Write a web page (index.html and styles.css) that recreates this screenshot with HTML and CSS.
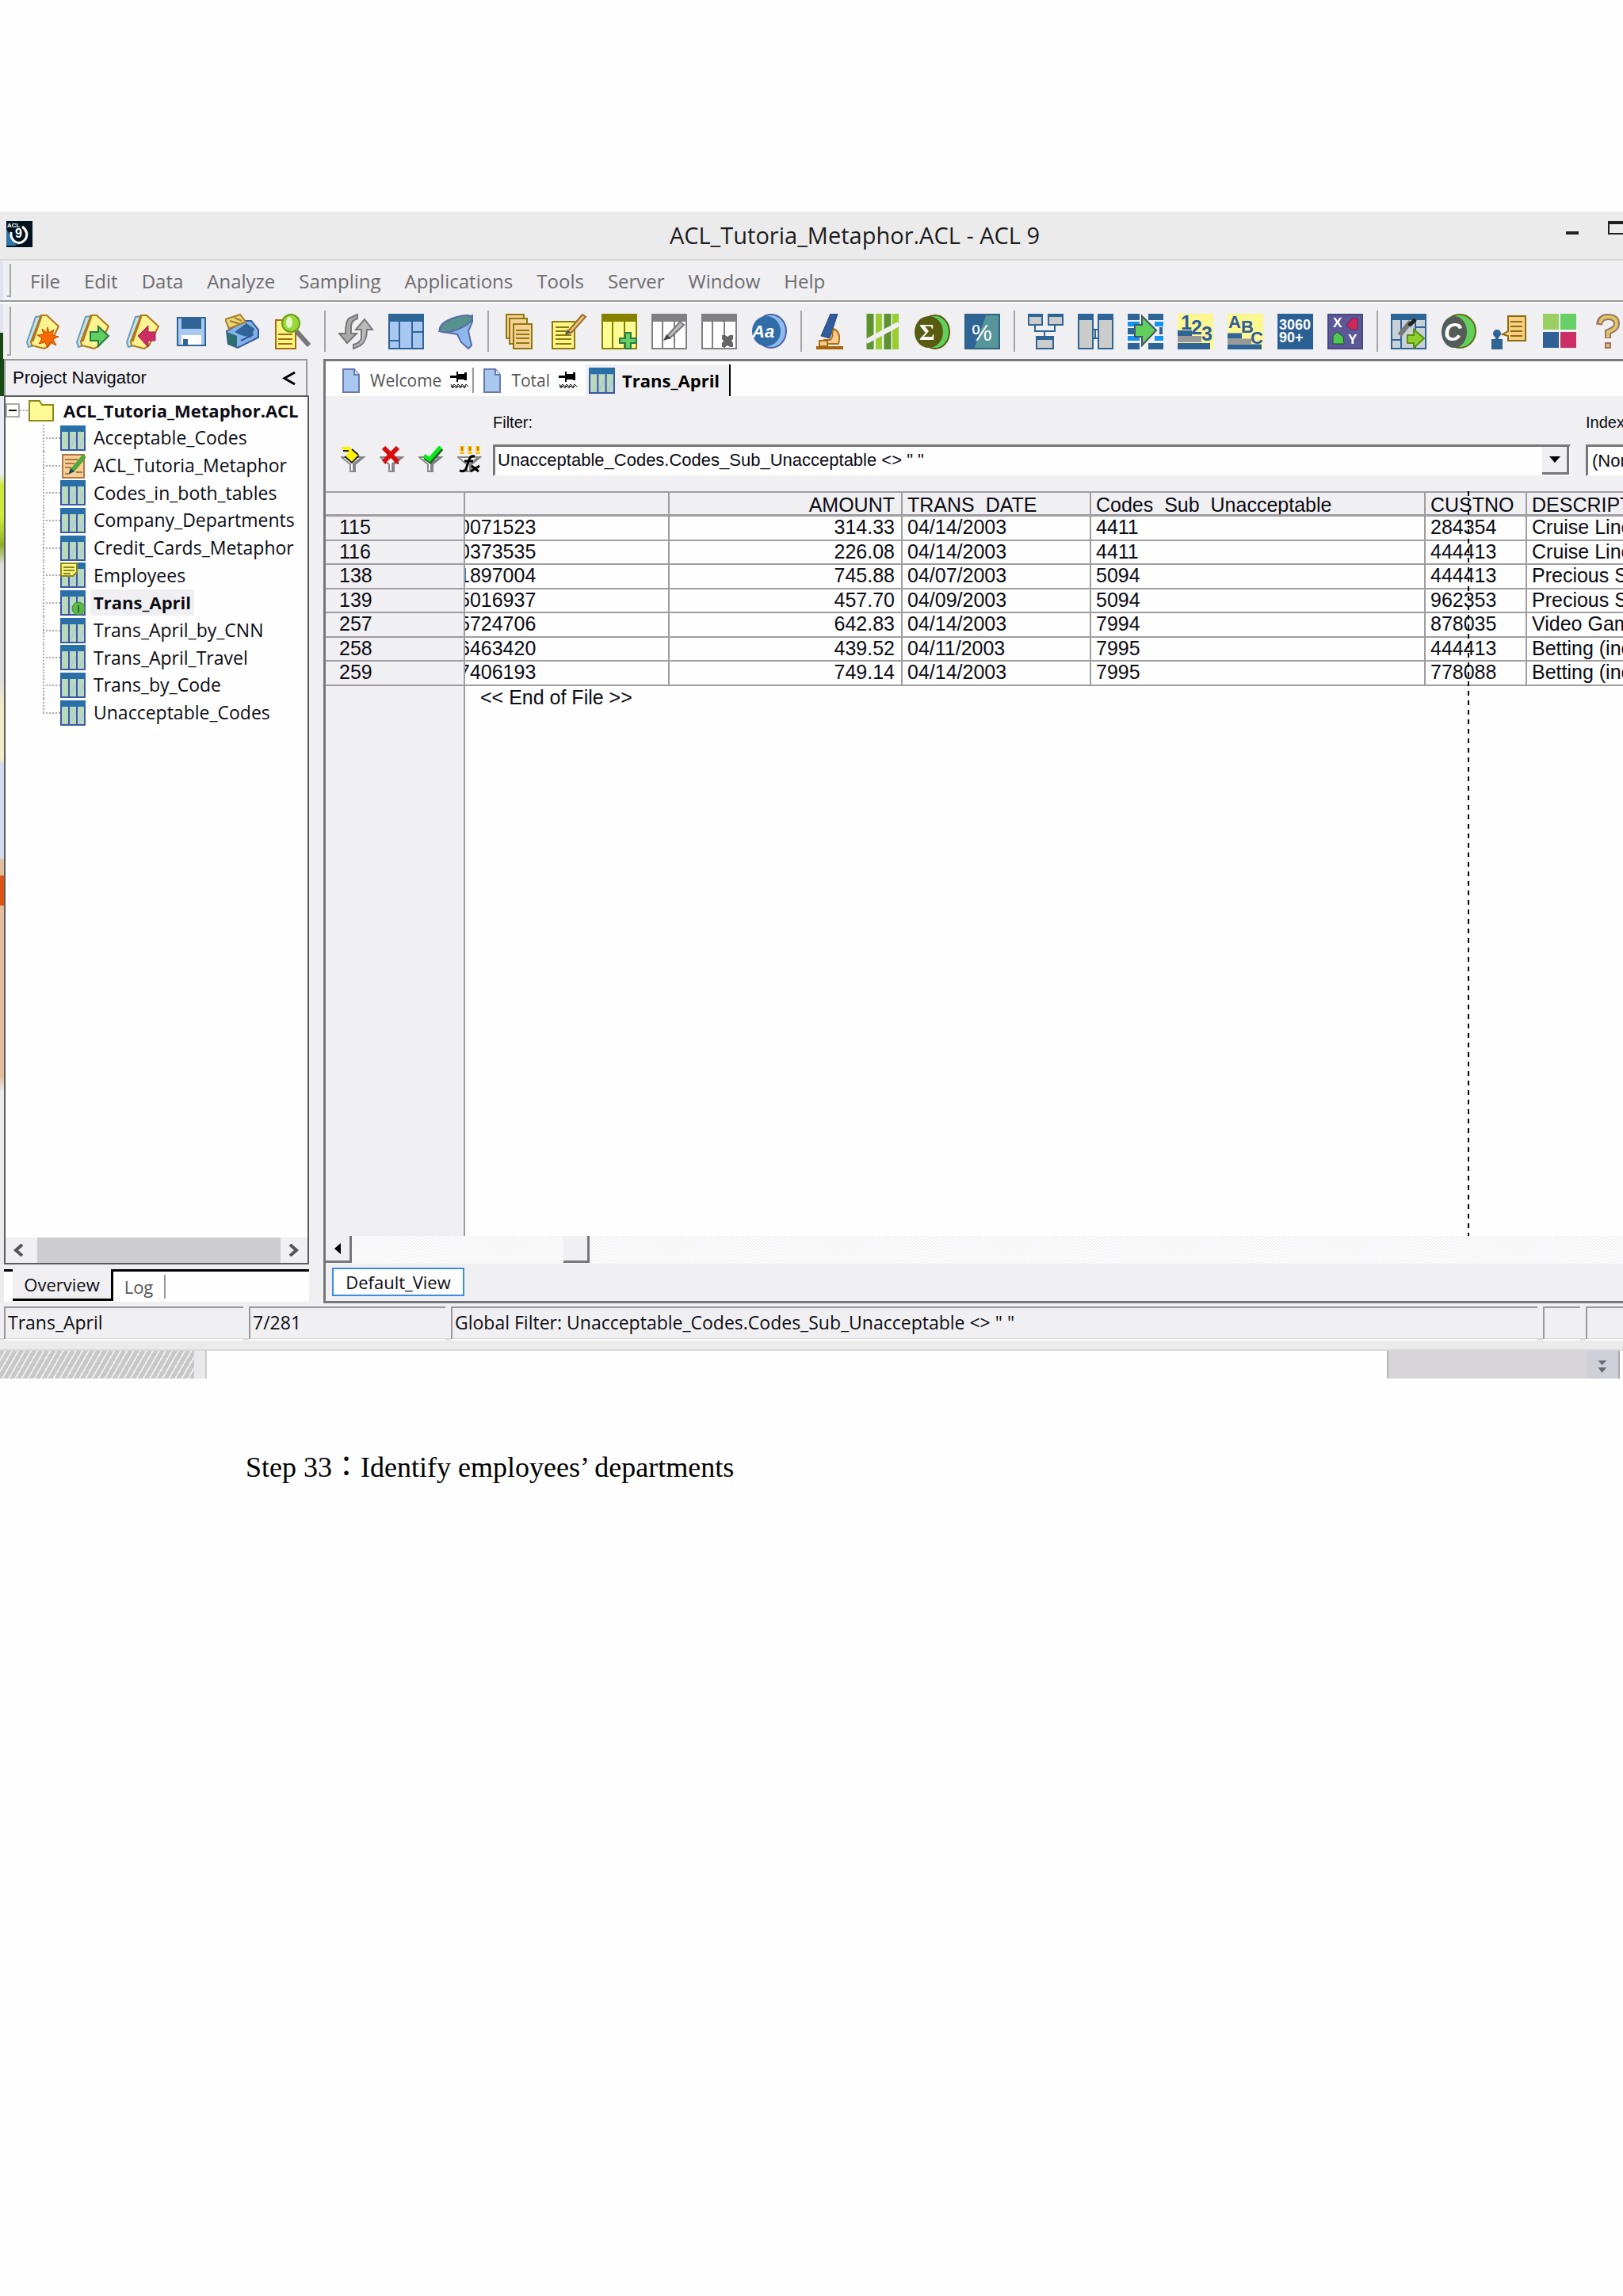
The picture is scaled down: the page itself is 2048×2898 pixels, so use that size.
FILE: index.html
```html
<!DOCTYPE html>
<html lang="en">
<head>
<meta charset="utf-8">
<title>ACL_Tutoria_Metaphor.ACL - ACL 9</title>
<link rel="stylesheet" href="styles.css">
</head>
<body>
<svg class="defs" aria-hidden="true">
  <defs>
    <symbol id="table" viewBox="0 0 32 32">
      <rect x="1" y="1" width="30" height="30" fill="#b9d9bd" stroke="#3c57a4" stroke-width="2"/>
      <rect x="0" y="0" width="32" height="8" fill="#2a70a8"/>
      <path d="M11 8V31M21 8V31" stroke="#3c57a4" stroke-width="2"/>
      <path d="M14 27L19 14M25 27L29 16" stroke="#a9c9e8" stroke-width="2"/>
    </symbol>
    <symbol id="doc" viewBox="0 0 22 31">
      <path d="M1 1H15L21 8V30H1Z" fill="#a8c8f0" stroke="#6a78b0" stroke-width="2"/>
      <path d="M15 1V8H21" fill="#d8e8fa" stroke="#6a78b0" stroke-width="2"/>
    </symbol>
    <symbol id="pin" viewBox="0 0 24 22">
      <path d="M0 5H9V8H0ZM8 0H10V13H8ZM10 3H18V10H10ZM18 1H21V11H18Z" fill="#000"/>
      <path d="M1 16L3 19L5 16L8 19L10 16L13 19L15 16L18 19L20 16L23 19" fill="none" stroke="#000" stroke-width="1"/>
      <path d="M1 18L3 21L5 18L8 21L10 18L13 21L15 18L18 21L20 18" fill="none" stroke="#000" stroke-width="1"/>
    </symbol>
    <symbol id="funnel" viewBox="0 0 32 34">
      <path d="M1 14H29L18 23V32H12V23Z" fill="#fff" stroke="#8a8a8c" stroke-width="2"/>
      <path d="M19 23L30 14H25L15 22V33H19Z" fill="#858588"/>
    </symbol>
    <symbol id="book" viewBox="0 0 45 45">
      <path d="M13 4L19 3L11 40L4 42L2 36Z" fill="#c3e3f2" stroke="#6c9db5" stroke-width="2"/>
      <path d="M20 2H27L42 16L30 40L24 44L8 40L7 35Z" fill="#fdf391" stroke="#b07818" stroke-width="2"/>
      <path d="M20 3L9 35" stroke="#b07818" stroke-width="3"/>
    </symbol>
  </defs>
</svg>

<div class="page">
  <div class="window">
    <header class="titlebar">
      <svg class="app-icon" viewBox="0 0 33 33"><rect width="33" height="33" fill="#04141f"/><path d="M0 10L12 31H0Z" fill="#2b78a8"/><path d="M2 16Q4 30 20 30H2Z" fill="#2b78a8"/><path d="M6 14Q5 22 11 26Q18 30 24 23Q29 14 20 7" fill="none" stroke="#fff" stroke-width="3"/><text x="11" y="21" class="glyph" font-size="16" fill="#fff">9</text><text x="1" y="8" class="glyph" font-size="8" fill="#fff">ACL</text></svg>
      <h1 class="title">ACL_Tutoria_Metaphor.ACL - ACL 9</h1>
      <div class="controls">
        <button type="button" class="minimize" aria-label="Minimize"></button>
        <button type="button" class="maximize" aria-label="Maximize"></button>
      </div>
    </header>

    <nav class="menubar">
      <span class="grip"></span>
      <button type="button">File</button><button type="button">Edit</button><button type="button">Data</button><button type="button">Analyze</button><button type="button">Sampling</button><button type="button">Applications</button><button type="button">Tools</button><button type="button">Server</button><button type="button">Window</button><button type="button">Help</button>
    </nav>

    <div class="toolbar">
      <span class="grip"></span>
      <div class="tools">
        <button type="button" aria-label="New project"><svg viewBox="0 0 45 45"><use href="#book"/><path d="M28 17L30 24L36 20L34 27L42 29L35 32L39 40L31 36L28 43L25 36L17 38L21 31L15 27L23 26L21 19L27 24Z" fill="#ff6a00" stroke="#c04a00"/></svg></button>
        <button type="button" aria-label="Open project"><svg viewBox="0 0 45 45"><use href="#book"/><path d="M19 23H29V16L42 28L29 41V34H19Z" fill="#5fcf5f" stroke="#2a7a4a" stroke-width="2"/></svg></button>
        <button type="button" aria-label="Close project"><svg viewBox="0 0 45 45"><use href="#book"/><path d="M38 23H29V15L16 28L29 42V34H38Z" fill="#cc2f66" stroke="#a02050"/></svg></button>
        <button type="button" aria-label="Save"><svg viewBox="0 0 45 45"><rect x="3" y="5" width="35" height="35" fill="#a8c8f2" stroke="#2f6496" stroke-width="2"/><rect x="8" y="5" width="25" height="14" fill="#2f6496"/><rect x="8" y="27" width="25" height="12" fill="#fff"/><rect x="10" y="32" width="6" height="7" fill="#2f6496"/></svg></button>
        <button type="button" aria-label="Print"><svg viewBox="0 0 45 45"><path d="M2 22L24 9H33L42 20V30L16 43L4 38Z" fill="#82b2ea" stroke="#39569a" stroke-width="2"/><path d="M12 23L27 12L37 19L33 30L20 27Z" fill="#2f6496"/><path d="M2 23L15 28V43L4 38Z" fill="#2d6f70"/><path d="M20 34L36 26" stroke="#39569a" stroke-width="2"/><path d="M0 7L19 1L26 10L5 19Z" fill="#e8d67c" stroke="#a87c28" stroke-width="2"/><path d="M6 9L19 13M12 5L21 9" stroke="#a87c28" stroke-width="2"/></svg></button>
        <button type="button" aria-label="Search log"><svg viewBox="0 0 45 45"><rect x="1" y="8" width="25" height="36" fill="#fdf584" stroke="#a86c10" stroke-width="2"/><path d="M4 26H22M4 32H22M4 38H22" stroke="#a86c10" stroke-width="2"/><path d="M27 22L43 40" stroke="#777" stroke-width="6"/><circle cx="20" cy="12" r="11" fill="#9bd83a" stroke="#6a9c1a" stroke-width="2"/><ellipse cx="18" cy="11" rx="4" ry="7" fill="#e6f8c8"/></svg></button>
      </div>
      <div class="tools">
        <button type="button" aria-label="Refresh"><svg viewBox="0 0 45 45"><path d="M24 1L13 6Q9 10 9 25H1L11 37L23 25H16V15Q17 8 24 6Z" fill="#aaa" stroke="#777" stroke-width="2"/><path d="M19 44L28 40Q36 34 36 20H43L33 7L22 20H29V30Q28 37 19 39Z" fill="#bbb" stroke="#777" stroke-width="2"/></svg></button>
        <button type="button" aria-label="View layout"><svg viewBox="0 0 45 45"><rect x="1" y="1" width="43" height="43" fill="#a8c8f2" stroke="#2f6496" stroke-width="2"/><rect width="45" height="10" fill="#2f6496"/><path d="M14 9V44M30 9V44M1 34H14M30 23H44" stroke="#2f6496" stroke-width="2"/></svg></button>
        <button type="button" aria-label="Filter"><svg viewBox="0 0 45 45"><path d="M2 22L24 26L29 36L38 44L42 40L38 22L43 10V2Z" fill="#8cb8ee" stroke="#5a6ca8" stroke-width="2"/><path d="M2 22Q0 12 20 5Q40 -1 43 5Q42 13 24 20Q8 26 2 22Z" fill="#56918e" stroke="#5a6ca8" stroke-width="2"/></svg></button>
      </div>
      <div class="tools">
        <button type="button" aria-label="Copy"><svg viewBox="0 0 45 45"><g fill="#f8cf94" stroke="#8c7a10" stroke-width="2"><rect x="6" y="1" width="22" height="30"/><rect x="10" y="6" width="22" height="32"/><rect x="15" y="13" width="23" height="31"/></g><path d="M18 21H35M18 26H35M18 31H35M18 37H35" stroke="#8c7a10" stroke-width="2"/></svg></button>
        <button type="button" aria-label="Edit script"><svg viewBox="0 0 45 45"><rect x="1" y="10" width="28" height="34" fill="#fdf584" stroke="#8c7a10" stroke-width="2"/><path d="M5 17H22M5 22H18M5 27H25M5 32H25M5 38H25" stroke="#8c7a10" stroke-width="2"/><path d="M20 23L39 1L43 4L25 24Z" fill="#f0c080" stroke="#99702a" stroke-width="2"/><path d="M17 27L19 20L25 24Z" fill="#555"/></svg></button>
        <button type="button" aria-label="Add table"><svg viewBox="0 0 45 45"><rect x="1" y="1" width="43" height="43" fill="#fdfd94" stroke="#868200" stroke-width="2"/><rect width="45" height="10" fill="#868200"/><path d="M14 9V44M29 9V44" stroke="#868200" stroke-width="2"/><path d="M30 24H37V31H44V37H37V44H30V37H23V31H30Z" fill="#66cf66" stroke="#2c7a44" stroke-width="2"/></svg></button>
        <button type="button" aria-label="Edit table"><svg viewBox="0 0 45 45"><rect x="1" y="1" width="43" height="43" fill="#fff" stroke="#808083" stroke-width="2"/><rect width="45" height="10" fill="#808083"/><path d="M14 9V44M29 9V44" stroke="#808083" stroke-width="2"/><path d="M20 28L36 10L41 14L23 31Z" fill="#bbb" stroke="#777" stroke-width="2"/><path d="M15 34L19 26L24 31Z" fill="#444"/></svg></button>
        <button type="button" aria-label="Delete table"><svg viewBox="0 0 45 45"><rect x="1" y="1" width="43" height="43" fill="#fff" stroke="#808083" stroke-width="2"/><rect width="45" height="10" fill="#808083"/><path d="M14 9V44M29 9V44" stroke="#808083" stroke-width="2"/><path d="M26 27H30L33 29L36 27H40V32L38 34L40 37V42H36L33 40L30 42H26V37L28 34L26 32Z" fill="#666"/></svg></button>
        <button type="button" aria-label="Format"><svg viewBox="0 0 45 45"><ellipse cx="25" cy="22" rx="19" ry="21" fill="#8fbbee" stroke="#4a62a8" stroke-width="2"/><ellipse cx="19" cy="22" rx="18" ry="19" fill="#2f6ca8"/><text x="1" y="30" class="glyph italic" font-size="22" fill="#fff">Aa</text></svg></button>
      </div>
      <div class="tools">
        <button type="button" aria-label="Examine"><svg viewBox="0 0 45 45"><path d="M20 0H29L19 31L8 28Z" fill="#2f5c9c" stroke="#24487c"/><path d="M24 19Q34 24 30 38H12V33H20Q24 27 22 25Z" fill="#f8cc94" stroke="#b06c10" stroke-width="2"/><rect x="6" y="34" width="10" height="7" fill="#f8cc94" stroke="#b06c10" stroke-width="2"/><path d="M2 43H36" stroke="#a86408" stroke-width="4"/></svg></button>
        <button type="button" aria-label="Count"><svg viewBox="0 0 45 45"><path d="M7 0V45M29 0V45" stroke="#5c9330" stroke-width="9"/><path d="M18 0V45M39 0V45" stroke="#9acd32" stroke-width="8"/><path d="M2 35L43 13" stroke="#f0eff1" stroke-width="6"/></svg></button>
        <button type="button" aria-label="Total"><svg viewBox="0 0 45 45"><ellipse cx="26" cy="23" rx="18" ry="21" fill="#62cf5c" stroke="#585c10" stroke-width="2"/><ellipse cx="18" cy="23" rx="18" ry="20" fill="#585c10"/><text x="6" y="33" class="glyph serif" font-size="30" fill="#fff">Σ</text></svg></button>
        <button type="button" aria-label="Statistics"><svg viewBox="0 0 45 45"><rect width="45" height="45" fill="#2f6496"/><path d="M28 0H45V45H12Z" fill="#56969a"/><rect x="1" y="1" width="43" height="43" fill="none" stroke="#2f6080" stroke-width="2"/><text x="9" y="34" class="glyph regular" font-size="29" fill="#fff">%</text></svg></button>
      </div>
      <div class="tools">
        <button type="button" aria-label="Relations"><svg viewBox="0 0 45 45"><g fill="#ccc" stroke="#2f6496" stroke-width="2"><rect x="1" y="1" width="17" height="13"/><rect x="26" y="1" width="18" height="13"/><rect x="11" y="29" width="21" height="15"/></g><path d="M0 2H19M25 2H45M10 31H33" stroke="#2f6496" stroke-width="4"/><path d="M9 14V22H34V14M21 22V29" fill="none" stroke="#2f6496" stroke-width="2"/></svg></button>
        <button type="button" aria-label="Join"><svg viewBox="0 0 45 45"><g fill="#ccc" stroke="#2f6496" stroke-width="2"><rect x="1" y="1" width="18" height="43"/><rect x="26" y="1" width="18" height="43"/></g><path d="M0 4H20M25 4H45" stroke="#2f6496" stroke-width="8"/><path d="M19 20H26M19 31H26M22 20V31" stroke="#2f6496" stroke-width="2"/></svg></button>
        <button type="button" aria-label="Extract"><svg viewBox="0 0 45 45"><path d="M0 4H15M26 4H45M0 22H15M0 41H15M26 41H45" stroke="#2f6496" stroke-width="8"/><path d="M0 13H15M34 13H45M0 31H15M34 31H45" stroke="#1495f5" stroke-width="6"/><path d="M42 17V26" stroke="#2f6496" stroke-width="4"/><path d="M9 14H18V3L36 21L18 40V29H9Z" fill="#62cf5c" stroke="#456" stroke-width="2"/></svg></button>
        <button type="button" aria-label="Sort"><svg viewBox="0 0 45 45"><rect width="45" height="45" fill="#fdf791"/><path d="M0 25H18M0 41H41" stroke="#2f6496" stroke-width="8"/><path d="M0 32H30" stroke="#999" stroke-width="8"/><g class="glyph" font-size="25" fill="#2f5c9c"><text x="4" y="20">1</text><text x="17" y="26">2</text><text x="30" y="34">3</text></g></svg></button>
        <button type="button" aria-label="Index"><svg viewBox="0 0 45 45"><rect width="45" height="45" fill="#fdf791"/><path d="M0 28H18M0 42H43" stroke="#2f6496" stroke-width="7"/><path d="M0 35H30" stroke="#999" stroke-width="7"/><g class="glyph" font-size="22" fill="#2f5c9c"><text x="1" y="18">A</text><text x="17" y="24">B</text><text x="29" y="38">C</text></g></svg></button>
        <button type="button" aria-label="Age"><svg viewBox="0 0 45 45"><rect width="45" height="45" fill="#2b6094"/><g class="glyph" font-size="18" fill="#fff"><text x="2" y="20">3060</text><text x="2" y="36">90+</text></g></svg></button>
        <button type="button" aria-label="Cross-tabulate"><svg viewBox="0 0 45 45"><rect x="1" y="1" width="43" height="43" fill="#5a5896" stroke="#4a4884" stroke-width="2"/><path d="M24 14L31 6H38V20H30Z" fill="#d0285c" stroke="#702050"/><path d="M7 38V28L12 23L20 29L21 38Z" fill="#4ec850" stroke="#205030"/><g class="glyph" font-size="17" fill="#fff"><text x="7" y="17">X</text><text x="26" y="38">Y</text></g></svg></button>
      </div>
      <div class="tools">
        <button type="button" aria-label="Export view"><svg viewBox="0 0 45 45"><rect x="1" y="1" width="43" height="43" fill="#c8d0d8" stroke="#2f6496" stroke-width="2"/><rect width="45" height="8" fill="#2f6496"/><path d="M13 8V44M31 8V44M1 33H13M31 17H44" stroke="#2f6496" stroke-width="2"/><path d="M11 27L25 10" stroke="#777" stroke-width="6"/><path d="M23 15L31 7" stroke="#222" stroke-width="5"/><path d="M21 27H29V20L42 31L29 43V37H21Z" fill="#8ed02c" stroke="#5a9010" stroke-width="2"/></svg></button>
        <button type="button" aria-label="Command"><svg viewBox="0 0 45 45"><ellipse cx="24" cy="22" rx="20" ry="21" fill="#62cf5c" stroke="#5c6c10" stroke-width="2"/><ellipse cx="17" cy="23" rx="16" ry="20" fill="#555b58"/><text x="4" y="34" class="glyph italic" font-size="31" fill="#fff">C</text></svg></button>
        <button type="button" aria-label="Notes"><svg viewBox="0 0 45 45"><circle cx="8" cy="25" r="5" fill="#2f6496"/><path d="M1 45V32H6V28H10V32H15V45Z" fill="#2f6496"/><path d="M22 3H44V34H22V28L15 26L22 22Z" fill="#f8cf84" stroke="#8c6c10" stroke-width="2"/><path d="M25 10H40M25 16H40M25 22H40M25 28H40" stroke="#8c6c10" stroke-width="2"/></svg></button>
        <button type="button" aria-label="Windows"><svg viewBox="0 0 45 45"><path d="M3 0H23V20H3Z" fill="#9acf62"/><path d="M25 0H45V20H25Z" fill="#66cf66"/><path d="M3 23H23V43H3Z" fill="#2f6096"/><path d="M25 23H45V43H25Z" fill="#cc2f66"/></svg></button>
        <button type="button" aria-label="Help"><svg viewBox="0 0 45 45"><path d="M11 14Q12 4 22 4Q33 4 33 13Q33 19 22 23V31M22 36V44" fill="none" stroke="#a0706a" stroke-width="8"/><path d="M12 12Q13 4 22 4Q33 4 33 13Q33 19 22 23V30M22 38V42" fill="none" stroke="#dcc860" stroke-width="4"/></svg></button>
      </div>
    </div>

    <div class="workspace">
      <aside class="navigator">
        <div class="nav-head"><h2>Project Navigator</h2><button type="button" aria-label="Collapse"><svg viewBox="0 0 18 18"><path d="M17 1L3 9L17 17" fill="none" stroke="#000" stroke-width="3"/></svg></button></div>
        <div class="nav-body">
          <ul class="tree">
            <li class="root"><span class="expander"></span><span class="stub"></span><svg class="folder" viewBox="0 0 32 27"><path d="M1 1H14L17 6H31V26H1Z" fill="#fdf996" stroke="#8c8a14" stroke-width="2"/></svg><b>ACL_Tutoria_Metaphor.ACL</b></li>
            <li><span class="branch"></span><svg><use href="#table"/></svg><span>Acceptable_Codes</span></li>
            <li><span class="branch"></span><svg viewBox="0 0 32 32"><rect x="3" y="2" width="27" height="29" fill="#f8cf98" stroke="#b07840" stroke-width="2"/><path d="M6 8H22M6 13H18M6 18H14M20 24H28M6 26H10" stroke="#b07840" stroke-width="2"/><path d="M15 22L31 3" stroke="#55a83c" stroke-width="6"/><path d="M10 27L13 19L18 23Z" fill="#245"/></svg><span>ACL_Tutoria_Metaphor</span></li>
            <li><span class="branch"></span><svg><use href="#table"/></svg><span>Codes_in_both_tables</span></li>
            <li><span class="branch"></span><svg><use href="#table"/></svg><span>Company_Departments</span></li>
            <li><span class="branch"></span><svg><use href="#table"/></svg><span>Credit_Cards_Metaphor</span></li>
            <li><span class="branch"></span><svg viewBox="0 0 32 32"><use href="#table"/><path d="M1 1H21V12L16 17H1Z" fill="#fdf58a" stroke="#8c8a14" stroke-width="2"/><path d="M4 6H18M4 10H18M4 14H13" stroke="#8c8a14" stroke-width="2"/></svg><span>Employees</span></li>
            <li class="current"><span class="branch"></span><svg viewBox="0 0 32 32"><use href="#table"/><circle cx="23" cy="23" r="8" fill="#5cb848" stroke="#3c8c3c"/><path d="M23 19V28" stroke="#2a6a3a" stroke-width="2"/></svg><b>Trans_April</b></li>
            <li><span class="branch"></span><svg><use href="#table"/></svg><span>Trans_April_by_CNN</span></li>
            <li><span class="branch"></span><svg><use href="#table"/></svg><span>Trans_April_Travel</span></li>
            <li><span class="branch"></span><svg><use href="#table"/></svg><span>Trans_by_Code</span></li>
            <li><span class="branch"></span><svg><use href="#table"/></svg><span>Unacceptable_Codes</span></li>
          </ul>
          <div class="nav-scroll">
            <button type="button" aria-label="Scroll left"><svg viewBox="0 0 14 16"><path d="M12 1L4 8L12 15" fill="none" stroke="#555" stroke-width="4"/></svg></button>
            <span class="nav-thumb"></span>
            <button type="button" aria-label="Scroll right"><svg viewBox="0 0 14 16"><path d="M2 1L10 8L2 15" fill="none" stroke="#555" stroke-width="4"/></svg></button>
          </div>
        </div>
        <div class="nav-tabs"><button type="button" class="on">Overview</button><button type="button" class="off">Log</button></div>
      </aside>

      <main class="document">
        <div class="doc-tabs">
          <button type="button" class="doc-tab"><svg class="doc-icon"><use href="#doc"/></svg>Welcome<svg class="pin"><use href="#pin"/></svg></button>
          <button type="button" class="doc-tab"><svg class="doc-icon"><use href="#doc"/></svg>Total<svg class="pin"><use href="#pin"/></svg></button>
          <button type="button" class="doc-tab active"><svg class="table-icon"><use href="#table"/></svg>Trans_April</button>
        </div>

        <div class="filter-bar">
          <div class="filter-tools">
            <button type="button" aria-label="Edit filter"><svg viewBox="0 0 32 34"><use href="#funnel"/><path d="M1 1H13V5H17L22 11L14 20L6 13L10 8H4Z" fill="#fff200"/><path d="M3 6H10M14 4L22 11M5 13L14 21L23 12" fill="none" stroke="#222" stroke-width="2"/></svg></button>
            <button type="button" aria-label="Remove filter"><svg viewBox="0 0 32 34"><use href="#funnel"/><path d="M6 20L8 22M20 20L24 22" stroke="#600" stroke-width="2"/><path d="M5 2L23 20M23 2L5 20" stroke="#d80c0c" stroke-width="6"/></svg></button>
            <button type="button" aria-label="Set filter"><svg viewBox="0 0 32 34"><use href="#funnel"/><path d="M8 14L15 19L29 3" fill="none" stroke="#2a5a2a" stroke-width="6"/><path d="M7 12L14 17L28 1" fill="none" stroke="#08e818" stroke-width="5"/></svg></button>
            <button type="button" aria-label="Filter expression"><svg viewBox="0 0 32 34"><use href="#funnel"/><path d="M6 0V10M16 0V10M26 0V10" stroke="#f8c000" stroke-width="5" stroke-dasharray="6 1 3"/><path d="M6 1V6M16 1V6M26 1V6" stroke="#a03000" stroke-width="1"/><path d="M22 13Q16 11 14 20L11 29Q9 33 3 31M9 19H20M18 25L27 32M28 25L17 32" fill="none" stroke="#000" stroke-width="3"/></svg></button>
          </div>
          <div class="field field-filter">
            <label for="filter">Filter:</label>
            <div class="combo"><input id="filter" type="text" value='Unacceptable_Codes.Codes_Sub_Unacceptable &lt;&gt; " "'><button type="button" aria-label="Filter history"><svg viewBox="0 0 14 8"><path d="M0 0H14L7 8Z"/></svg></button></div>
          </div>
          <div class="field field-index">
            <label for="index">Index:</label>
            <select id="index"><option>(None)</option></select>
          </div>
        </div>

        <div class="grid">
          <table>
            <colgroup><col class="c-row"><col class="c-card"><col class="c-amount"><col class="c-date"><col class="c-code"><col class="c-cust"><col></colgroup>
            <thead>
              <tr><th></th><th></th><th class="num"><span>AMOUNT</span></th><th><span>TRANS_DATE</span></th><th><span>Codes_Sub_Unacceptable</span></th><th><span>CUSTNO</span></th><th><span>DESCRIPTION</span></th></tr>
            </thead>
            <tbody>
              <tr><th>115</th><td class="card">0071523</td><td class="num">314.33</td><td>04/14/2003</td><td>4411</td><td>284354</td><td>Cruise Lines</td></tr>
              <tr><th>116</th><td class="card">0373535</td><td class="num">226.08</td><td>04/14/2003</td><td>4411</td><td>444413</td><td>Cruise Lines</td></tr>
              <tr><th>138</th><td class="card">1897004</td><td class="num">745.88</td><td>04/07/2003</td><td>5094</td><td>444413</td><td>Precious Stones</td></tr>
              <tr><th>139</th><td class="card">5016937</td><td class="num">457.70</td><td>04/09/2003</td><td>5094</td><td>962353</td><td>Precious Stones</td></tr>
              <tr><th>257</th><td class="card">5724706</td><td class="num">642.83</td><td>04/14/2003</td><td>7994</td><td>878035</td><td>Video Games</td></tr>
              <tr><th>258</th><td class="card">6463420</td><td class="num">439.52</td><td>04/11/2003</td><td>7995</td><td>444413</td><td>Betting (including</td></tr>
              <tr><th>259</th><td class="card">7406193</td><td class="num">749.14</td><td>04/14/2003</td><td>7995</td><td>778088</td><td>Betting (including</td></tr>
            </tbody>
          </table>
          <p class="eof">&lt;&lt; End of File &gt;&gt;</p>
          <span class="page-guide"></span>
        </div>

        <div class="view-scroll">
          <button type="button" aria-label="Scroll left"><svg viewBox="0 0 8 14"><path d="M8 0V14L0 7Z"/></svg></button>
          <span class="view-thumb"></span>
        </div>
        <div class="view-tabs"><button type="button">Default_View</button></div>
      </main>
    </div>

    <footer class="statusbar">
      <span class="cell table-name">Trans_April</span>
      <span class="cell count">7/281</span>
      <span class="cell message">Global Filter: Unacceptable_Codes.Codes_Sub_Unacceptable &lt;&gt; " "</span>
      <span class="cell spare"></span>
      <span class="cell spare"></span>
    </footer>
  </div>

  <div class="backdrop">
    <span class="hatch"></span>
    <span class="ruler"></span>
    <span class="paper"></span>
    <span class="shade"></span>
    <svg class="next-page" viewBox="0 0 41 35"><path d="M15 12H26L20 18ZM15 21H26L20 28Z" fill="#666b78"/></svg>
  </div>

  <p class="step">Step 33：Identify employees’ departments</p>
</div>
</body>
</html>
```
FILE: styles.css
```css
* { box-sizing: border-box; }

body {
  margin: 0;
  background: #fefefe;
  color: #0c0c14;
  font-family: "Open Sans", "Noto Sans", sans-serif;
  font-size: 23px;
}

button {
  padding: 0;
  border: 0;
  background: none;
  color: inherit;
  font: inherit;
}

svg { display: block; flex: none; }
h1, h2, p, ul { margin: 0; padding: 0; font-weight: normal; }
.defs { position: absolute; width: 0; height: 0; }
.glyph { font-family: "Liberation Sans", sans-serif; font-weight: bold; }
.regular { font-weight: normal; }
.italic { font-style: italic; }
.serif { font-family: "Liberation Serif", serif; }

.page { padding-top: 267px; overflow: hidden; }
.window { background: #f0eff1; }

/* Title bar */
.titlebar {
  display: flex;
  height: 62px;
  padding: 0 0 0 8px;
  background: #ebebec;
  border-bottom: 2px solid #d9d8db;
}
.app-icon { width: 33px; height: 33px; margin-top: 12px; }
.title {
  flex: 1;
  padding-left: 140px;
  text-align: center;
  font-size: 29px;
  line-height: 60px;
  color: #1c1c1c;
}
.controls { display: flex; gap: 37px; width: 72px; padding-top: 12px; }
.controls button { flex: none; height: 17px; }
.minimize { width: 16px; border-bottom: 4px solid #222; }
.maximize { width: 26px; border: 2px solid #222; border-top-width: 4px; }

/* Menu and tool bars */
.menubar {
  display: flex;
  align-items: center;
  gap: 30px;
  height: 52px;
  padding-left: 9px;
  border-bottom: 2px solid #99989b;
  background: linear-gradient(#dfe4f0, #dfe4f0) 0 0 / 4px 100% no-repeat;
  color: #6c6c6e;
  font-size: 24px;
}
.grip {
  flex: none;
  align-self: stretch;
  width: 5px;
  margin: 4px 0;
  border: solid #a5a4a7;
  border-width: 0 2px 2px 0;
}
.menubar .grip { margin-right: -6px; }
.toolbar {
  display: flex;
  height: 72px;
  padding-left: 9px;
  border-top: 2px solid #fff;
  background: linear-gradient(#dfe4f0 0 37px, #174a12 37px) 0 0 / 4px 100% no-repeat;
}
.tools { display: flex; flex: none; align-items: center; gap: 18px; padding: 0 17px 0 18px; }
.tools + .tools { background: linear-gradient(#a5a4a7, #a5a4a7) 0 9px / 2px 52px no-repeat; }
.tools button, .tools svg { width: 45px; height: 45px; flex: none; }

/* Workspace */
.workspace {
  display: flex;
  gap: 18px;
  height: 1192px;
  background: linear-gradient(#174a12 0 47px, #e8ecf4 47px 145px, #cdea3a 160px 200px, #8fb02c 235px, #ddd 260px 400px, #f3ecc8 440px 505px, #d4dcf2 512px 630px, #e0bf9c 632px 652px, #dd5316 652px 690px, #e3bd9c 690px 905px, #ebebec 925px) 0 0 / 5px 100% no-repeat;
  padding-left: 5px;
}
.navigator { display: flex; flex-direction: column; width: 385px; flex: none; }
.nav-head {
  display: flex;
  justify-content: space-between;
  align-items: center;
  height: 46px;
  padding: 0 13px 0 9px;
  margin-right: 2px;
  border: 2px solid #99989b;
  border-bottom: 0;
  background: #f0eff1;
  font-family: "Liberation Sans", sans-serif;
}
.nav-head h2 { font-size: 22px; }
.nav-head svg { width: 17px; height: 17px; }
.nav-body {
  display: flex;
  flex-direction: column;
  flex: 1;
  border: 2px solid #5c5b5e;
  background: #fefefe;
}
.tree {
  display: grid;
  grid-template-rows: repeat(12, 1fr);
  height: 416px;
  list-style: none;
  line-height: 32px;
}
.tree li { display: flex; align-items: center; white-space: nowrap; }
.tree svg { width: 32px; height: 32px; }
.tree li > svg + * { margin-left: 6px; padding: 0 4px 1px; }
.tree b { font-size: 22px; }
.tree .folder { height: 27px; }
.tree .root svg + b { margin-left: 8px; }
.tree .current b { background: #f0eff1; }
.expander {
  width: 18px;
  height: 18px;
  border: 2px solid #aaa;
  background: linear-gradient(#111, #111) center / 10px 2px no-repeat;
}
.stub { width: 11px; height: 2px; background: repeating-linear-gradient(90deg, #aaa 0 2px, transparent 2px 4px); }
.branch {
  align-self: stretch;
  width: 22px;
  margin-left: 47px;
  background:
    repeating-linear-gradient(#aaa 0 2px, transparent 2px 4px) 0 0 / 2px 100% no-repeat,
    repeating-linear-gradient(90deg, #aaa 0 2px, transparent 2px 4px) 0 50% / 100% 2px no-repeat;
}
li:last-child .branch { background-size: 2px 50%, 100% 2px; }
.nav-scroll { display: flex; height: 32px; margin-top: auto; background: #f0eff1; }
.nav-scroll button { display: flex; align-items: center; justify-content: center; width: 34px; }
.nav-scroll button:first-child { width: 40px; padding-right: 8px; }
.nav-scroll svg { width: 14px; height: 16px; }
.nav-thumb { flex: 1; background: #cdccce; }
.nav-tabs {
  display: flex;
  height: 41px;
  margin: 6px 0 2px;
  padding-left: 11px;
  border-top: 3px solid #000;
  background: #fefefe;
}
.nav-tabs .on {
  width: 127px;
  height: 40px;
  margin-top: -3px;
  border: solid #000;
  border-width: 0 3px 3px 0;
  background: #f0eff1;
  font-size: 22px;
}
.nav-tabs .off {
  width: 66px;
  height: 30px;
  margin-top: 4px;
  border-right: 2px solid #999;
  color: #555;
  font-size: 22px;
  line-height: 30px;
}

/* Document area */
.document {
  display: flex;
  flex-direction: column;
  flex: 1;
  min-width: 0;
  border: 3px solid #77767a;
  border-right: 0;
}
.doc-tabs { display: flex; height: 44px; padding: 4px 0 0 15px; background: #fefefe; }
.doc-tab {
  display: flex;
  align-items: center;
  padding: 0 6px;
  color: #555;
  font-size: 21px;
  background: linear-gradient(#999, #999) 100% 4px / 2px 32px no-repeat;
}
.doc-tab .doc-icon { width: 22px; height: 31px; margin-right: 13px; }
.doc-tab .pin { width: 24px; height: 22px; margin-left: 11px; }
.doc-tab + .doc-tab { padding-left: 12px; }
.doc-tab:nth-child(2) { background: none; }
.doc-tab.active {
  margin-left: 4px;
  padding: 0 12px 0 4px;
  border-right: 2px solid #000;
  background: #f0eff1;
  color: #000;
  font-size: 22px;
  font-weight: bold;
}
.table-icon { width: 33px; height: 33px; margin-right: 9px; }

.filter-bar {
  display: flex;
  height: 120px;
  padding: 21px 0 0 19px;
  font-family: "Liberation Sans", sans-serif;
}
.filter-tools { display: flex; align-items: flex-start; gap: 17px; width: 192px; padding-top: 42px; }
.filter-tools svg { width: 32px; height: 34px; }
.field { display: flex; flex-direction: column; gap: 16px; }
.field label { font-size: 20px; line-height: 24px; }
.field-filter { flex: 1; }
.field-index { width: 47px; flex: none; margin-left: 19px; }
.combo, .field select {
  height: 40px;
  border: solid #77767a;
  border-width: 3px 2px 2px 3px;
  border-right-color: #f8f8f8;
  border-bottom-color: #f8f8f8;
  background: #fefefe;
}
.combo { display: flex; }
.combo input {
  flex: 1;
  min-width: 0;
  padding: 0 0 2px 3px;
  border: 0;
  background: none;
  color: inherit;
  font: 22px "Liberation Sans", sans-serif;
}
.combo button {
  display: flex;
  align-items: center;
  justify-content: center;
  width: 34px;
  border: solid #77767a;
  border-width: 0 3px 3px 0;
  background: #f0eff1;
}
.combo svg { width: 14px; height: 8px; }
.field select {
  width: 200px;
  padding: 0 5px;
  border-radius: 0;
  color: inherit;
  font: 22px "Liberation Sans", sans-serif;
  appearance: none;
}

/* Data grid */
.grid {
  position: relative;
  flex: 1;
  overflow: hidden;
  font-family: "Liberation Sans", sans-serif;
  font-size: 25px;
  line-height: 26px;
  background: linear-gradient(90deg, #f0eff1 0 174px, #9f9d9f 174px 176px, #fefefe 176px);
}
table { width: 100%; table-layout: fixed; border-collapse: separate; border-spacing: 0; }
.c-row { width: 176px; }
.c-card { width: 258px; }
.c-amount { width: 294px; }
.c-date { width: 238px; }
.c-code { width: 422px; }
.c-cust { width: 128px; }
th, td {
  padding: 0 8px 0 6px;
  overflow: hidden;
  border: solid #9f9d9f;
  border-width: 0 2px 2px 0;
  font-weight: normal;
  text-align: left;
  vertical-align: top;
  white-space: nowrap;
}
th:last-child, td:last-child { padding-right: 0; border-right: 0; }
thead th { height: 32px; border-top-width: 2px; border-bottom-width: 3px; background: #f0eff1; }
thead span { display: block; height: 27px; overflow: hidden; line-height: 31px; }
tbody tr:nth-child(odd) { height: 31px; }
tbody tr:nth-child(even) { height: 30px; }
tbody th { padding-left: 17px; background: #f0eff1; }
.num { text-align: right; }
.card { padding: 0; text-indent: -8px; }
.eof { padding: 1px 0 0 195px; }
.page-guide {
  position: absolute;
  top: 0;
  bottom: 0;
  left: 1441px;
  width: 2px;
  background: repeating-linear-gradient(#000 0 6px, transparent 6px 12px);
}

.view-scroll {
  display: flex;
  gap: 267px;
  height: 35px;
  background: repeating-conic-gradient(#f2f1f4 0 25%, #fefefe 0 50%) 0 0 / 4px 4px;
}
.view-scroll button, .view-thumb {
  display: flex;
  align-items: center;
  justify-content: center;
  width: 33px;
  height: 34px;
  border: 3px solid #77767a;
  border-top: 0;
  border-left: 0;
  background: #f0eff1;
}
.view-scroll svg { width: 8px; height: 14px; }
.view-tabs { height: 47px; padding: 5px 8px; }
.view-tabs button {
  width: 167px;
  height: 36px;
  border: 2px solid #3c8ce0;
  background: #fefefe;
  font-size: 22px;
  line-height: 30px;
}

/* Status bar */
.statusbar {
  display: flex;
  gap: 7px;
  height: 60px;
  padding: 4px 0 15px 5px;
  background: linear-gradient(#f0eff1 0 44px, #d9d8db 44px 46px, #ebebec 46px 58px, #d9d8db 58px);
}
.cell {
  flex: none;
  padding-left: 3px;
  border: solid #99989b;
  border-width: 2px 0 0 2px;
  box-shadow: 0 2px 0 #fff;
  line-height: 36px;
  white-space: nowrap;
}
.table-name { width: 302px; }
.count { width: 248px; }
.message { flex: 1; }
.spare { width: 47px; }

/* Page strip behind the window */
.backdrop { display: flex; height: 35px; }
.hatch { width: 245px; background: repeating-linear-gradient(120deg, #c9c8c8 0 5px, #ececec 5px 7px); }
.ruler { width: 16px; border-right: 2px solid #ccc; background: #e9e8eb; }
.paper { flex: 1; }
.shade { width: 252px; border-left: 2px solid #b8b6ba; background: #d6d4d7; }
.next-page { width: 42px; height: 35px; margin-right: 4px; background: #cfd0d7; border-right: 2px solid #aaa; }

.step {
  padding: 91px 0 0 310px;
  color: #000;
  font: 36px/42px "Liberation Serif", "Noto Sans CJK TC", serif;
}
```
